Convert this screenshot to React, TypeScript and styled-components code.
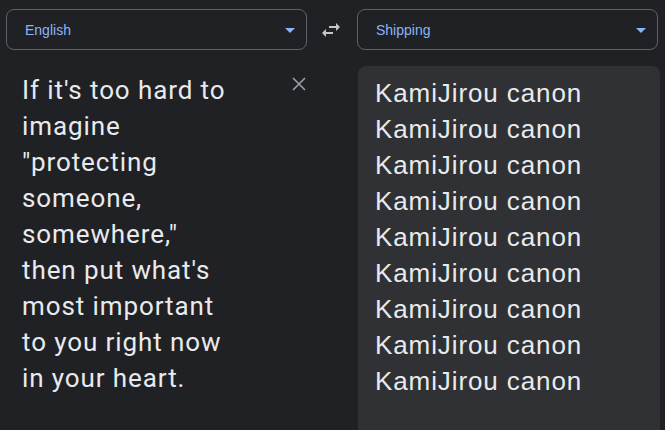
import React from "react";
import styled, { createGlobalStyle } from "styled-components";

const Global = createGlobalStyle`
  html, body { margin: 0; padding: 0; background: #202124; overflow: hidden; }
  body { width: 665px; height: 430px; }
`;

const Page = styled.div`
  display: flex;
  flex-direction: column;
  padding: 9px 0 0 6px;
  gap: 16px;
  height: 430px;
  box-sizing: border-box;
`;

const TopRow = styled.div`
  display: flex;
  align-items: center;
`;

const Select = styled.div`
  width: 301px;
  height: 41px;
  box-sizing: border-box;
  border: 1px solid #5f6368;
  border-radius: 8px;
  display: flex;
  align-items: center;
  justify-content: space-between;
  padding: 0 11px 0 18px;
  font-family: "Liberation Sans", Arial, sans-serif;
  font-size: 14px;
  color: #8ab4f8;
`;

const Caret = styled.span`
  width: 0;
  height: 0;
  border-left: 5px solid transparent;
  border-right: 5px solid transparent;
  border-top: 5px solid #8ab4f8;
  margin-top: 2px;
`;

const SwapWrap = styled.div`
  width: 50px;
  display: flex;
  justify-content: center;
  align-items: center;
  padding-right: 2px;
  box-sizing: border-box;
`;

const Panels = styled.div`
  display: flex;
  flex: 1;
`;

const Source = styled.div`
  width: 301px;
  position: relative;
  padding: 6px 0 0 16px;
  box-sizing: border-box;
`;

const SourceText = styled.div`
  width: 212px;
  font-family: Roboto, "Open Sans", sans-serif;
  font-size: 26px;
  letter-spacing: 0.9px;
  line-height: 36px;
  color: #e8eaed;
`;

const Close = styled.div`
  position: absolute;
  top: 6px;
  right: -4px;
  width: 24px;
  height: 24px;
  display: flex;
  align-items: center;
  justify-content: center;
`;

const Target = styled.div`
  margin-left: 51px;
  width: 302px;
  flex: none;
  background: #303134;
  border-radius: 8px 8px 0 0;
  padding: 9px 0 0 17px;
  box-sizing: border-box;
`;

const TargetLine = styled.div`
  font-family: "Liberation Sans", Arial, sans-serif;
  font-size: 26px;
  letter-spacing: 0.9px;
  line-height: 36px;
  color: #e8eaed;
`;

export default function App() {
  const lines = Array.from({ length: 9 });
  return (
    <>
      <Global />
      <Page>
        <TopRow>
          <Select>
            <span>English</span>
            <Caret />
          </Select>
          <SwapWrap>
            <svg width="24" height="24" viewBox="0 0 24 24" fill="#c4c7c5">
              <path d="M6.99 11L3 15l3.99 4v-3H14v-2H6.99v-3zM21 9l-3.99-4v3H10v2h7.01v3L21 9z" />
            </svg>
          </SwapWrap>
          <Select>
            <span>Shipping</span>
            <Caret />
          </Select>
        </TopRow>
        <Panels>
          <Source>
            <SourceText>
              If it's too hard to imagine "protecting someone, somewhere," then put what's most important to you right now in your heart.
            </SourceText>
            <Close>
              <svg width="14" height="14" viewBox="0 0 14 14" stroke="#9aa0a6" strokeWidth="1.6">
                <path d="M1 1L13 13M13 1L1 13" />
              </svg>
            </Close>
          </Source>
          <Target>
            {lines.map((_, i) => (
              <TargetLine key={i}>KamiJirou canon</TargetLine>
            ))}
          </Target>
        </Panels>
      </Page>
    </>
  );
}
